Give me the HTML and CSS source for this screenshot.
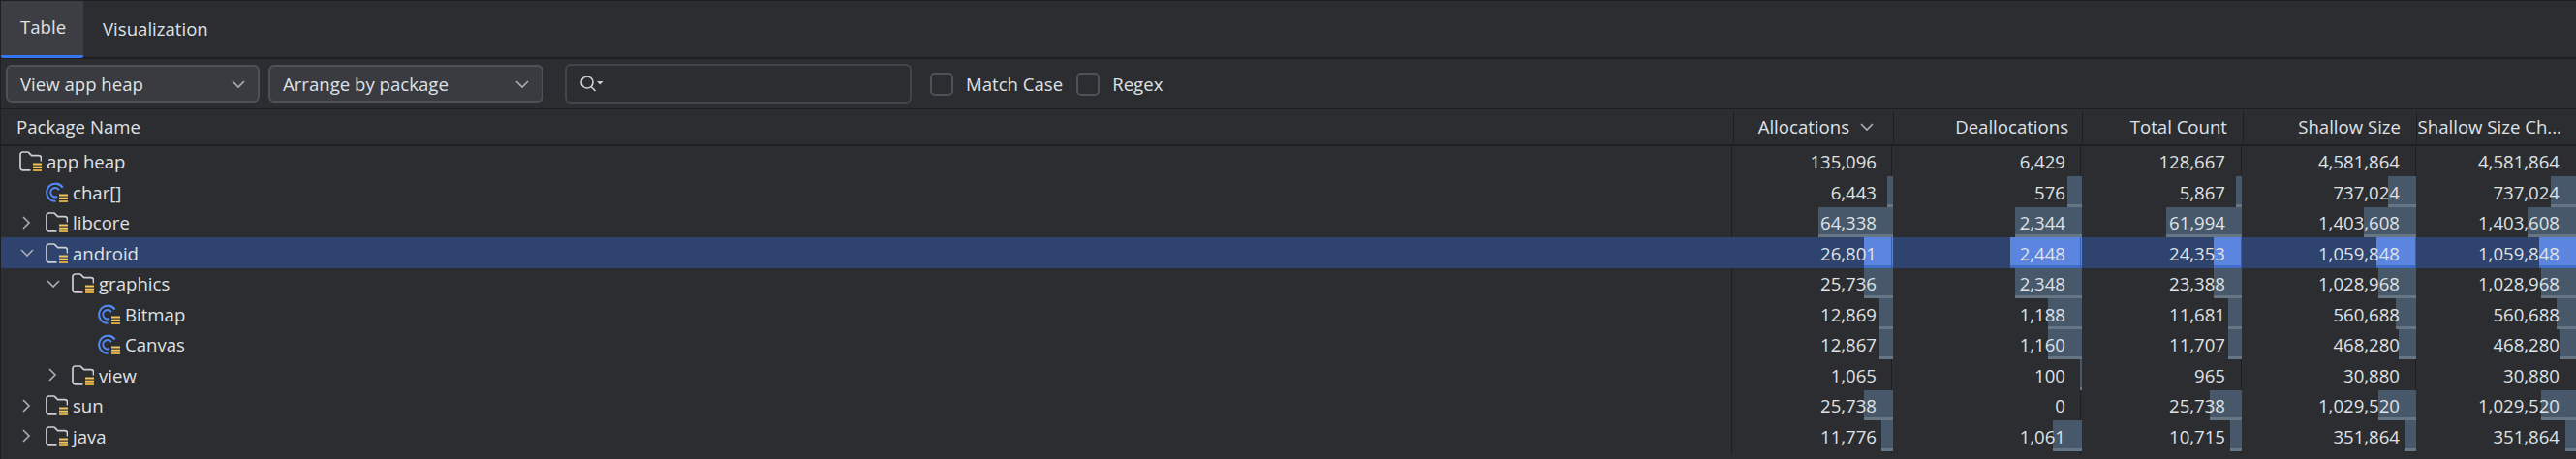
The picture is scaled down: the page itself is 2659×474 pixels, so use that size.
FILE: index.html
```html
<!DOCTYPE html>
<html lang="en">
<head>
<meta charset="utf-8">
<title>Table</title>
<link rel="stylesheet" href="styles.css">
</head>
<body>
<svg class="defs" width="0" height="0" aria-hidden="true">
  <symbol id="stack" viewBox="0 0 23 21">
    <path class="st" d="M14 13.5h9"/><path class="st" d="M14 16.7h9"/><path class="st2" d="M14 20h9"/>
  </symbol>
  <symbol id="folder" viewBox="0 0 23 21">
    <path class="fo" d="M11.5 19.8H3.5a2.5 2.5 0 0 1-2.5-2.5V3.5A2.5 2.5 0 0 1 3.5 1h5.2a1 1 0 0 1 .7.3l3 3a1 1 0 0 0 .7.3h6.9a2.5 2.5 0 0 1 2.5 2.5v3.4"/>
    <use href="#stack"/>
  </symbol>
  <symbol id="cls" viewBox="0 0 23 21">
    <path class="cl" d="M17.5 5.5A9 9 0 1 0 10.500 19.8"/>
    <path class="cl" d="M17.500 5.500A9 9 0 0 0 11 1.400"/>
    <path class="cl" d="M14 8.300A4.700 4.700 0 1 0 12 15"/>
    <use href="#stack"/>
  </symbol>
  <symbol id="cr" viewBox="0 0 14 14"><path class="ch" d="M3 1l6 6-6 6"/></symbol>
  <symbol id="cd" viewBox="0 0 14 14"><path class="ch" d="M1 4l6 6 6-6"/></symbol>
</svg>
<main class="app">
  <nav class="tabs">
    <div class="tab active">Table</div>
    <div class="tab">Visualization</div>
  </nav>
  <div class="toolbar">
    <div class="combo c1"><span>View app heap</span><svg class="cc" width="14" height="14"><use href="#cd"/></svg></div>
    <div class="combo c2"><span>Arrange by package</span><svg class="cc" width="14" height="14"><use href="#cd"/></svg></div>
    <div class="search">
      <svg width="24" height="17" viewBox="0 0 24 17"><circle class="mg" cx="7" cy="7" r="6"/><path class="mg" d="M11 11.500l4.500 4.500"/><path class="mt" d="M17 6h6.500l-3.250 3.500z"/></svg>
    </div>
    <div class="check"></div><span class="lab">Match Case</span>
    <div class="check c-2"></div><span class="lab">Regex</span>
  </div>
  <div class="head">
    <div class="hc name">Package Name</div>
    <div class="hc h1">Allocations<svg class="sort" width="14" height="14"><use href="#cd"/></svg></div>
    <div class="hc h2">Deallocations</div>
    <div class="hc h3">Total Count</div>
    <div class="hc h3">Shallow Size</div>
    <div class="hc h4">Shallow Size Ch...</div>
  </div>
  <div class="rows">
    <div class="row">
      <div class="n l0"><svg class="ic"><use href="#folder"/></svg><span>app heap</span></div>
      <div class="c a"><span>135,096</span></div><div class="c a"><span>6,429</span></div><div class="c b"><span>128,667</span></div><div class="c b"><span>4,581,864</span></div><div class="c d"><span>4,581,864</span></div>
    </div>
    <div class="row">
      <div class="n l1"><i class="slot"></i><svg class="ic"><use href="#cls"/></svg><span>char[]</span></div>
      <div class="c a"><i class="bar" style="width:6px"></i><span>6,443</span></div><div class="c a"><i class="bar" style="width:15px"></i><span>576</span></div><div class="c b"><i class="bar" style="width:6px"></i><span>5,867</span></div><div class="c b"><i class="bar" style="width:29px"></i><span>737,024</span></div><div class="c d"><i class="bar" style="width:26px"></i><span>737,024</span></div>
    </div>
    <div class="row">
      <div class="n l1"><i class="slot"><svg class="cv" width="14" height="14"><use href="#cr"/></svg></i><svg class="ic"><use href="#folder"/></svg><span>libcore</span></div>
      <div class="c a"><i class="bar" style="width:77px"></i><span>64,338</span></div><div class="c a"><i class="bar" style="width:69px"></i><span>2,344</span></div><div class="c b"><i class="bar" style="width:78px"></i><span>61,994</span></div><div class="c b"><i class="bar" style="width:54px"></i><span>1,403,608</span></div><div class="c d"><i class="bar" style="width:50px"></i><span>1,403,608</span></div>
    </div>
    <div class="row sel">
      <div class="n l1"><i class="slot"><svg class="cv" width="14" height="14"><use href="#cd"/></svg></i><svg class="ic"><use href="#folder"/></svg><span>android</span></div>
      <div class="c a"><i class="bar" style="width:30px"></i><span>26,801</span></div><div class="c a"><i class="bar" style="width:74px"></i><span>2,448</span></div><div class="c b"><i class="bar" style="width:29px"></i><span>24,353</span></div><div class="c b"><i class="bar" style="width:41px"></i><span>1,059,848</span></div><div class="c d"><i class="bar" style="width:38px"></i><span>1,059,848</span></div>
    </div>
    <div class="row">
      <div class="n l2"><i class="slot"><svg class="cv" width="14" height="14"><use href="#cd"/></svg></i><svg class="ic"><use href="#folder"/></svg><span>graphics</span></div>
      <div class="c a"><i class="bar" style="width:30px"></i><span>25,736</span></div><div class="c a"><i class="bar" style="width:69px"></i><span>2,348</span></div><div class="c b"><i class="bar" style="width:29px"></i><span>23,388</span></div><div class="c b"><i class="bar" style="width:39px"></i><span>1,028,968</span></div><div class="c d"><i class="bar" style="width:36px"></i><span>1,028,968</span></div>
    </div>
    <div class="row">
      <div class="n l3"><i class="slot"></i><svg class="ic"><use href="#cls"/></svg><span>Bitmap</span></div>
      <div class="c a"><i class="bar" style="width:14px"></i><span>12,869</span></div><div class="c a"><i class="bar" style="width:35px"></i><span>1,188</span></div><div class="c b"><i class="bar" style="width:14px"></i><span>11,681</span></div><div class="c b"><i class="bar" style="width:21px"></i><span>560,688</span></div><div class="c d"><i class="bar" style="width:20px"></i><span>560,688</span></div>
    </div>
    <div class="row">
      <div class="n l3"><i class="slot"></i><svg class="ic"><use href="#cls"/></svg><span>Canvas</span></div>
      <div class="c a"><i class="bar" style="width:14px"></i><span>12,867</span></div><div class="c a"><i class="bar" style="width:35px"></i><span>1,160</span></div><div class="c b"><i class="bar" style="width:14px"></i><span>11,707</span></div><div class="c b"><i class="bar" style="width:18px"></i><span>468,280</span></div><div class="c d"><i class="bar" style="width:17px"></i><span>468,280</span></div>
    </div>
    <div class="row">
      <div class="n l2"><i class="slot"><svg class="cv" width="14" height="14"><use href="#cr"/></svg></i><svg class="ic"><use href="#folder"/></svg><span>view</span></div>
      <div class="c a"><span>1,065</span></div><div class="c a"><i class="bar" style="width:2px"></i><span>100</span></div><div class="c b"><span>965</span></div><div class="c b"><span>30,880</span></div><div class="c d"><span>30,880</span></div>
    </div>
    <div class="row">
      <div class="n l1"><i class="slot"><svg class="cv" width="14" height="14"><use href="#cr"/></svg></i><svg class="ic"><use href="#folder"/></svg><span>sun</span></div>
      <div class="c a"><i class="bar" style="width:30px"></i><span>25,738</span></div><div class="c a"><span>0</span></div><div class="c b"><i class="bar" style="width:33px"></i><span>25,738</span></div><div class="c b"><i class="bar" style="width:39px"></i><span>1,029,520</span></div><div class="c d"><i class="bar" style="width:36px"></i><span>1,029,520</span></div>
    </div>
    <div class="row">
      <div class="n l1"><i class="slot"><svg class="cv" width="14" height="14"><use href="#cr"/></svg></i><svg class="ic"><use href="#folder"/></svg><span>java</span></div>
      <div class="c a"><i class="bar" style="width:12px"></i><span>11,776</span></div><div class="c a"><i class="bar" style="width:30px"></i><span>1,061</span></div><div class="c b"><i class="bar" style="width:12px"></i><span>10,715</span></div><div class="c b"><i class="bar" style="width:12px"></i><span>351,864</span></div><div class="c d"><i class="bar" style="width:11px"></i><span>351,864</span></div>
    </div>
    <div class="row tail">
      <div class="n"></div><div class="c a"></div><div class="c a"></div><div class="c b"></div><div class="c b"></div><div class="c d"></div>
    </div>
  </div>
</main>
</body>
</html>
```
FILE: styles.css
```css
* { box-sizing: border-box; }
html, body { margin: 0; height: 100%; background: #2b2d30; overflow: hidden; }
body { font-family: "Open Sans", "Noto Sans", sans-serif; font-size: 18.6px; color: #dfe1e5; }
.defs { position: absolute; }
.app { height: 474px; border-left: 1px solid #1e1f22; border-top: 1px solid #1e1f22; background: #2b2d30; }

.tabs { display: flex; height: 60px; border-bottom: 2px solid #1e1f22; }
.tab { height: 59px; padding: 0 20px 3px; display: flex; align-items: center; flex: none; }
.tab.active { width: 85px; background: #3c3e43; border-bottom: 3px solid #3574f0; border-radius: 0 0 2px 2px; }

.toolbar { display: flex; align-items: center; height: 52px; padding-left: 5px; border-bottom: 1px solid #1e1f22; }
.combo { display: flex; align-items: center; justify-content: space-between; height: 39px; padding: 0 13px; background: #393b40; border: 2px solid #4e5157; border-radius: 6px; }
.c1 { width: 262px; }
.c2 { width: 284px; margin-left: 9px; }
.search { display: flex; align-items: center; width: 358px; height: 41px; margin-left: 22px; padding-left: 14px; border: 2px solid #43454a; border-radius: 6px; }
.check { width: 24px; height: 24px; margin-left: 19px; margin-top: 1px; border: 2px solid #4e5157; border-radius: 5px; }
.c-2 { margin-left: 14px; }
.lab { margin-left: 13px; }
.mg { fill: none; stroke: #ced0d6; stroke-width: 1.6; }
.mt { fill: #ced0d6; }

.head { display: grid; grid-template-columns: 1788px 165px 195px 166px 179px 165px; height: 38px; border-bottom: 2px solid #1e1f22; }
.hc { position: relative; display: flex; align-items: center; justify-content: flex-end; white-space: nowrap; padding-bottom: 1px; }
.hc::before { content: ""; position: absolute; left: 0; top: 2px; bottom: 1px; width: 1px; background: #1e1f22; }
.name { justify-content: flex-start; padding-left: 16px; }
.name::before { display: none; }
.h1 { padding-right: 20px; }
.h2 { padding-right: 14px; }
.h3 { padding-right: 16px; }
.h4 { padding-right: 15px; }
.sort { margin-left: 11px; }

.rows { margin-top: -0.1px; }
.row { display: grid; grid-template-columns: 1787px 166px 195px 165px 180px 165px; height: 31.5px; }
.row.tail { height: 3px; }
.sel { background: #2e436e; }

.n { display: flex; align-items: center; white-space: nowrap; border-right: 1px solid #1e1f22; }
.sel .n { border-right-color: #2e436e; }
.l0 { padding-left: 19px; }
.l1 { padding-left: 19px; }
.l2 { padding-left: 46px; }
.l3 { padding-left: 73px; }
.slot { display: flex; align-items: center; width: 27px; height: 14px; flex: none; padding-left: 1px; }
.ic { width: 23px; height: 21px; flex: none; margin-right: 5px; }
.fo { fill: none; stroke: #ced0d6; stroke-width: 1.7; }
.cl { fill: none; stroke: #548af7; stroke-width: 2; }
.st { fill: none; stroke: #f2c55c; stroke-width: 2; }
.st2 { fill: none; stroke: #d9a343; stroke-width: 2; }
.ch { fill: none; stroke: #a8abb2; stroke-width: 1.7; }

.c { position: relative; display: flex; align-items: center; justify-content: flex-end; padding-right: 17px; }
.c::before { content: ""; position: absolute; top: 0; bottom: 0; width: 1px; background: #1e1f22; }
.a::before { right: 1px; }
.b::before { right: 0; }
.d::before { display: none; }
.c span { position: relative; }
.bar { position: absolute; top: 0; bottom: 0; right: 0; background: #47586a; border-bottom: 3px solid #677685; }
.sel .bar { background: #5b85de; border-bottom-color: #3e6cc6; }
.sel .c::before { background: #2f5fbf; z-index: 1; }
```
